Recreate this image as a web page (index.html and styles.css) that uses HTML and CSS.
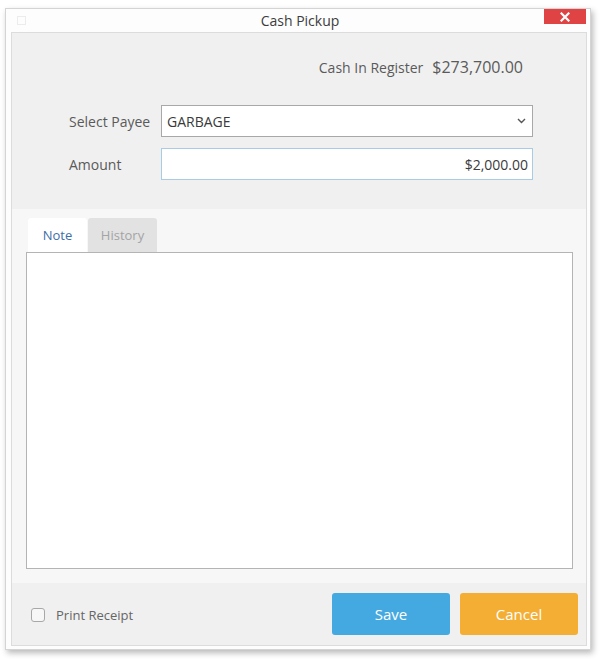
FILE: index.html
```html
<!DOCTYPE html>
<html>
<head>
<meta charset="utf-8">
<link rel="stylesheet" href="styles.css">
</head>
<body>
<div class="window">
  <div class="titlebar">
    <span class="app-icon"></span>
    <span class="title">Cash Pickup</span>
    <span class="close"><svg width="10" height="10" viewBox="0 0 10 10"><path d="M1.5 1.5 L8.5 8.5 M8.5 1.5 L1.5 8.5" stroke="#fff" stroke-width="2.2" stroke-linecap="square"/></svg></span>
  </div>
  <div class="content">
    <div class="top">
      <div class="register">
        <span class="reg-label">Cash In Register</span>
        <span class="reg-value">$273,700.00</span>
      </div>
      <div class="form-row">
        <span class="label">Select Payee</span>
        <div class="select">
          <span>GARBAGE</span>
          <svg width="9" height="6" viewBox="0 0 9 6"><path d="M1 1 L4.5 4.5 L8 1" stroke="#555" stroke-width="1.4" fill="none"/></svg>
        </div>
      </div>
      <div class="form-row">
        <span class="label">Amount</span>
        <div class="input">$2,000.00</div>
      </div>
    </div>
    <div class="middle">
      <div class="tabs">
        <div class="tab active">Note</div>
        <div class="tab">History</div>
      </div>
      <div class="note"></div>
    </div>
    <div class="footer">
      <label class="print">
        <span class="checkbox"></span>
        <span>Print Receipt</span>
      </label>
      <div class="buttons">
        <div class="btn save">Save</div>
        <div class="btn cancel">Cancel</div>
      </div>
    </div>
  </div>
</div>
</body>
</html>
```

FILE: styles.css
```css
html, body {
  margin: 0;
  padding: 0;
  background: #ffffff;
}
body {
  font-family: "Open Sans", "Noto Sans", sans-serif;
  color: #555;
  width: 600px;
  height: 659px;
  overflow: hidden;
}
.window {
  margin: 8px 0 0 5px;
  border: 1px solid #d4d4d4;
  background: #fdfdfd;
  box-shadow: 2px 3px 6px rgba(0,0,0,0.28);
  padding: 0 3px 3px 5px;
  box-sizing: content-box;
  display: flex;
  flex-direction: column;
  width: 576px;
  height: 637px;
}
.titlebar {
  height: 23px;
  display: flex;
  align-items: center;
  position: relative;
}
.app-icon {
  position: absolute;
  left: 6px;
  top: 7px;
  width: 7px;
  height: 7px;
  border: 1px solid #ececec;
}
.title {
  flex: 1;
  text-align: center;
  font-size: 14px;
  color: #3c3c3c;
  padding-left: 2px;
}
.close {
  position: absolute;
  right: 1px;
  top: 0;
  width: 42px;
  height: 15px;
  background: #e04343;
  display: flex;
  align-items: center;
  justify-content: center;
}
.content {
  flex: 1;
  border: 1px solid #dcdcdc;
  display: flex;
  flex-direction: column;
}
.top {
  background: #f0f0f0;
  height: 176px;
  box-sizing: border-box;
  padding-top: 23px;
}
.register {
  display: flex;
  justify-content: flex-end;
  align-items: baseline;
  padding-right: 63px;
  gap: 9px;
  height: 24px;
}
.reg-label {
  font-size: 14px;
  color: #5a5a5a;
}
.reg-value {
  font-size: 16px;
  color: #5a5a5a;
}
.form-row {
  display: flex;
  align-items: center;
  padding-left: 57px;
  margin-top: 11px;
}
.register + .form-row {
  margin-top: 25px;
}
.label {
  width: 92px;
  font-size: 14px;
  color: #5a5a5a;
}
.select, .input {
  width: 372px;
  height: 32px;
  box-sizing: border-box;
  background: #fff;
  font-size: 14px;
  color: #3a3a3a;
  display: flex;
  align-items: center;
}
.select {
  border: 1px solid #a8a8a8;
  justify-content: space-between;
  padding: 0 6px 0 5px;
}
.input {
  border: 1px solid #a9cbe6;
  justify-content: flex-end;
  padding-right: 4px;
}
.middle {
  background: #f7f7f7;
  height: 374px;
  box-sizing: border-box;
  padding: 9px 13px 14px 14px;
  display: flex;
  flex-direction: column;
}
.tabs {
  display: flex;
  padding-left: 2px;
  height: 34px;
}
.tab {
  width: 69px;
  display: flex;
  align-items: center;
  justify-content: center;
  font-size: 13px;
  color: #a4a4a4;
  background: #e2e2e2;
  border-radius: 3px 3px 0 0;
  margin-left: 1px;
}
.tab.active {
  width: 59px;
  margin-left: 0;
  background: #fff;
  color: #3d6fa6;
}
.note {
  flex: 1;
  background: #fff;
  border: 1px solid #b4b4b4;
}
.footer {
  background: #f0f0f0;
  flex: 1;
  display: flex;
  align-items: flex-start;
  justify-content: space-between;
  padding: 10px 8px 0 19px;
}
.print {
  display: flex;
  align-items: center;
  gap: 11px;
  font-size: 13px;
  color: #666;
  margin-top: 13px;
}
.checkbox {
  width: 12px;
  height: 12px;
  border: 1px solid #a8a8a8;
  border-radius: 3px;
  background: #f7f7f7;
}
.buttons {
  display: flex;
  gap: 10px;
}
.btn {
  width: 118px;
  height: 42px;
  border-radius: 3px;
  color: #fff;
  font-size: 15px;
  display: flex;
  align-items: center;
  justify-content: center;
}
.save {
  background: #45a9e1;
}
.cancel {
  background: #f4ae33;
}
```
